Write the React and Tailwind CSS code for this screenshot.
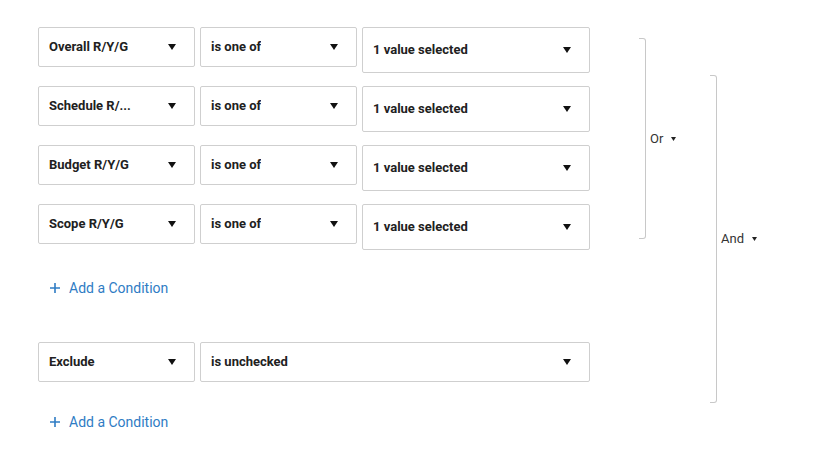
const rows = [
  { field: 'Overall R/Y/G', op: 'is one of', value: '1 value selected' },
  { field: 'Schedule R/...', op: 'is one of', value: '1 value selected' },
  { field: 'Budget R/Y/G', op: 'is one of', value: '1 value selected' },
  { field: 'Scope R/Y/G', op: 'is one of', value: '1 value selected' },
];

function Caret({ small }) {
  return small ? (
    <svg width="5" height="4" viewBox="0 0 5 4" className="ml-[8px]">
      <path d="M0 0H5L2.5 4Z" fill="#222" />
    </svg>
  ) : (
    <svg width="8" height="6" viewBox="0 0 8 6" className="shrink-0">
      <path d="M0 0H8L4 6Z" fill="#111" />
    </svg>
  );
}

function Select({ label, className }) {
  return (
    <div className={`flex items-center justify-between pl-[10px] pr-[18px] border border-[#cfcfcf] rounded-[2px] bg-white ${className}`}>
      <span className="text-[13px] font-bold text-[#212121] truncate">{label}</span>
      <Caret />
    </div>
  );
}

function AddCondition({ className }) {
  return (
    <div className={`flex items-center h-[20px] pl-[12px] text-[14px] text-[#2f7cc4] ${className}`}>
      <svg width="10" height="10" viewBox="0 0 10 10" className="mr-[9px]">
        <path d="M5 0V10M0 5H10" stroke="#2f7cc4" strokeWidth="1.6" />
      </svg>
      <span>Add a Condition</span>
    </div>
  );
}

export default function App() {
  return (
    <div className="w-[815px] h-[454px] bg-white pl-[38px] pt-[27px] flex items-start" style={{ fontFamily: 'Roboto, "Liberation Sans", sans-serif' }}>
      <div className="w-[672px] flex flex-col">
        <div className="flex items-stretch">
          <div className="w-[552px] flex flex-col gap-[13px]">
            {rows.map((r) => (
              <div key={r.field} className="flex items-start gap-[5px]">
                <Select label={r.field} className="w-[157px] h-[40px]" />
                <Select label={r.op} className="w-[157px] h-[40px]" />
                <Select label={r.value} className="w-[228px] h-[46px]" />
              </div>
            ))}
          </div>
          <div className="ml-[49px] my-[11px] w-[7px] border-t border-r border-b border-[#c8c8c8] rounded-r-[3px]" />
          <div className="flex items-center ml-[4px] text-[13px] text-[#333]">
            Or
            <Caret small />
          </div>
        </div>
        <AddCondition className="mt-[28px]" />
        <div className="mt-[44px] flex items-start gap-[5px] w-[552px]">
          <Select label="Exclude" className="w-[157px] h-[40px]" />
          <Select label="is unchecked" className="w-[390px] h-[40px]" />
        </div>
        <AddCondition className="mt-[30px]" />
      </div>
      <div className="flex items-center mt-[48px] h-[328px]">
        <div className="w-[7px] h-full border-t border-r border-b border-[#c8c8c8] rounded-r-[3px]" />
        <div className="flex items-center ml-[4px] text-[13px] text-[#333]">
          And
          <Caret small />
        </div>
      </div>
    </div>
  );
}
